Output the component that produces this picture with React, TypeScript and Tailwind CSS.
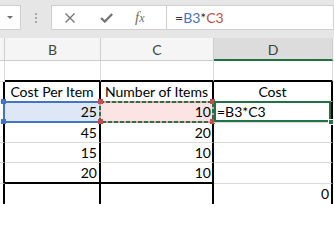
import React from "react";

const G = "border-[#dadada]";

function Dot() {
  return <span className="block h-[2px] w-[2px] bg-[#a9a9a9]" />;
}

export default function App() {
  return (
    <div className="h-[204px] w-[334px] overflow-hidden bg-white font-[Lato,sans-serif] text-[14px] leading-none text-black">
      {/* Formula bar */}
      <div className="flex h-[38px] bg-[#e6e6e6] pb-[8px] pt-[5px]">
        <div className="flex h-[25px] w-[21px] items-center justify-center border border-l-0 border-[#cfcfcf] bg-white">
          <svg width="6" height="3" viewBox="0 0 6 3">
            <path d="M0 0H6L3 3Z" fill="#6e6e6e" />
          </svg>
        </div>
        <div className="flex h-[25px] w-[30px] flex-col items-center justify-center gap-[2px]">
          <Dot />
          <Dot />
          <Dot />
        </div>
        <div className="flex h-[25px] w-[116px] items-center border border-[#cfcfcf] bg-white">
          <svg className="ml-[13px]" width="10" height="10" viewBox="0 0 10 10">
            <path d="M0.5 0.5L9.5 9.5M9.5 0.5L0.5 9.5" stroke="#767676" strokeWidth="1.4" fill="none" />
          </svg>
          <svg className="ml-[25px]" width="13" height="10" viewBox="0 0 13 10">
            <path d="M1 5L4.8 8.6L12.2 1" stroke="#737373" strokeWidth="2.2" fill="none" />
          </svg>
          <span className="ml-[22px] font-['Liberation_Serif',serif] text-[15px] italic text-[#707070]">
            f<span className="text-[12px]">x</span>
          </span>
        </div>
        <div className="flex h-[25px] flex-1 items-center border border-l-0 border-[#cfcfcf] bg-white pl-[8px]">
          <span className="text-[#333]">=</span>
          <span className="text-[#4472c4]">B3</span>
          <span className="text-[#333]">*</span>
          <span className="text-[#c0504d]">C3</span>
        </div>
      </div>

      {/* Column headers */}
      <div className="flex h-[23px] bg-[#f5f5f5] text-[#444]">
        <div className="w-[5px] shrink-0 border-b border-r border-[#cdcdcd]" />
        <div className="flex w-[96px] shrink-0 items-center justify-center border-b border-r border-[#cdcdcd] pt-[2px]">B</div>
        <div className="flex w-[113px] shrink-0 items-center justify-center border-b border-r border-[#cdcdcd] pt-[2px]">C</div>
        <div className="flex w-[119px] shrink-0 items-center justify-center border-b-2 border-r border-b-[#217346] border-r-[#cdcdcd] bg-[#dcdcdc] pt-[3px] text-[#2d4a38]">D</div>
        <div className="flex-1 border-b border-[#cdcdcd]" />
      </div>

      {/* Row 1 */}
      <div className="flex h-[21px]">
        <div className={`w-[5px] shrink-0 border-b border-r ${G}`} />
        <div className="w-[96px] shrink-0 border-b-2 border-r border-b-black border-r-[#dadada]" />
        <div className="w-[113px] shrink-0 border-b-2 border-r border-b-black border-r-[#dadada]" />
        <div className="w-[119px] shrink-0 border-b-2 border-r border-b-black border-r-[#dadada]" />
        <div className={`flex-1 border-b ${G}`} />
      </div>

      {/* Row 2 */}
      <div className="flex h-[20px]">
        <div className="w-[5px] shrink-0 border-b border-r-2 border-b-[#dadada] border-r-black" />
        <div className="flex w-[96px] shrink-0 items-center justify-center border-b border-r-2 border-b-[#dadada] border-r-black">Cost Per Item</div>
        <div className="flex w-[113px] shrink-0 items-center justify-center border-b border-r-2 border-b-[#dadada] border-r-black">Number of Items</div>
        <div className="flex w-[119px] shrink-0 items-center justify-center border-b border-r-2 border-b-[#dadada] border-r-black">Cost</div>
        <div className={`flex-1 border-b ${G}`} />
      </div>

      {/* Row 3 */}
      <div className="flex h-[21px]">
        <div className="w-[5px] shrink-0 border-b border-r-2 border-b-[#dadada] border-r-black" />
        <div className="relative flex w-[96px] shrink-0 items-center justify-end border-b border-r-2 border-b-[#dadada] border-r-black bg-[#dde7f5] pr-[2px]">
          <div className="absolute -bottom-[1px] -left-[2px] -right-[2px] -top-[1px] border-b-2 border-l-2 border-t-2 border-[#4472c4]">
            <span className="absolute -left-[4px] -top-[4px] h-[5px] w-[5px] bg-[#4472c4]" />
            <span className="absolute -bottom-[3px] -left-[4px] h-[5px] w-[5px] bg-[#4472c4]" />
          </div>
          <span className="relative">25</span>
        </div>
        <div className="relative flex w-[113px] shrink-0 items-center justify-end border-b border-r-2 border-b-[#dadada] border-r-black bg-[#fce4e4] pr-[1px]">
          <svg className="absolute -left-[2px] -top-[1px]" width="115" height="22" viewBox="0 0 115 22">
            <rect x="1" y="1" width="113" height="20" fill="none" stroke="#d9a3a3" strokeWidth="2" />
            <rect x="1" y="1" width="113" height="20" fill="none" stroke="#2e6e45" strokeWidth="2" strokeDasharray="4 2" />
          </svg>
          <span className="absolute -left-[3px] -top-[3px] h-[5px] w-[5px] bg-[#c0504d]" />
          <span className="absolute -bottom-[2px] -left-[3px] h-[5px] w-[5px] bg-[#c0504d]" />
          <span className="absolute -right-[3px] -top-[3px] h-[5px] w-[5px] bg-[#c0504d]" />
          <span className="absolute -bottom-[2px] -right-[3px] h-[5px] w-[5px] bg-[#c0504d]" />
          <span className="relative">10</span>
        </div>
        <div className="relative flex w-[119px] shrink-0 items-center justify-start border-b border-r-2 border-b-[#dadada] border-r-black pl-[3px]">
          <div className="absolute -top-[1px] bottom-0 left-0 right-0 border-2 border-[#217346]" />
          <span className="absolute -bottom-[3px] -right-[3px] h-[6px] w-[6px] border border-white bg-[#217346]" />
          <span className="relative">=B3*C3</span>
        </div>
        <div className={`flex-1 border-b ${G}`} />
      </div>

      {/* Row 4 */}
      <div className="flex h-[20px]">
        <div className="w-[5px] shrink-0 border-b border-r-2 border-b-[#dadada] border-r-black" />
        <div className="flex w-[96px] shrink-0 items-center justify-end border-b border-r-2 border-b-[#dadada] border-r-black pr-[2px]">45</div>
        <div className="flex w-[113px] shrink-0 items-center justify-end border-b border-r-2 border-b-[#dadada] border-r-black pr-[1px]">20</div>
        <div className="w-[119px] shrink-0 border-b border-r-2 border-b-[#dadada] border-r-black" />
        <div className={`flex-1 border-b ${G}`} />
      </div>

      {/* Row 5 */}
      <div className="flex h-[20px]">
        <div className="w-[5px] shrink-0 border-b border-r-2 border-b-[#dadada] border-r-black" />
        <div className="flex w-[96px] shrink-0 items-center justify-end border-b border-r-2 border-b-[#dadada] border-r-black pr-[2px]">15</div>
        <div className="flex w-[113px] shrink-0 items-center justify-end border-b border-r-2 border-b-[#dadada] border-r-black pr-[1px]">10</div>
        <div className="w-[119px] shrink-0 border-b border-r-2 border-b-[#dadada] border-r-black" />
        <div className={`flex-1 border-b ${G}`} />
      </div>

      {/* Row 6 */}
      <div className="flex h-[21px]">
        <div className="w-[5px] shrink-0 border-b border-r-2 border-b-[#dadada] border-r-black" />
        <div className="flex w-[96px] shrink-0 items-center justify-end border-b-2 border-r-2 border-black pr-[2px]">20</div>
        <div className="flex w-[113px] shrink-0 items-center justify-end border-b-2 border-r-2 border-black pr-[1px]">10</div>
        <div className="w-[119px] shrink-0 border-b border-r-2 border-b-[#dadada] border-r-black" />
        <div className={`flex-1 border-b ${G}`} />
      </div>

      {/* Row 7 */}
      <div className="flex h-[21px]">
        <div className="w-[5px] shrink-0 border-b border-r-2 border-b-[#dadada] border-r-black" />
        <div className="w-[96px] shrink-0 border-b border-r-2 border-b-[#dadada] border-r-black" />
        <div className="w-[113px] shrink-0 border-b border-r-2 border-b-[#dadada] border-r-black" />
        <div className="flex w-[119px] shrink-0 items-center justify-end border-b border-r-2 border-b-[#dadada] border-r-black pr-[2px]">0</div>
        <div className={`flex-1 border-b ${G}`} />
      </div>
    </div>
  );
}
